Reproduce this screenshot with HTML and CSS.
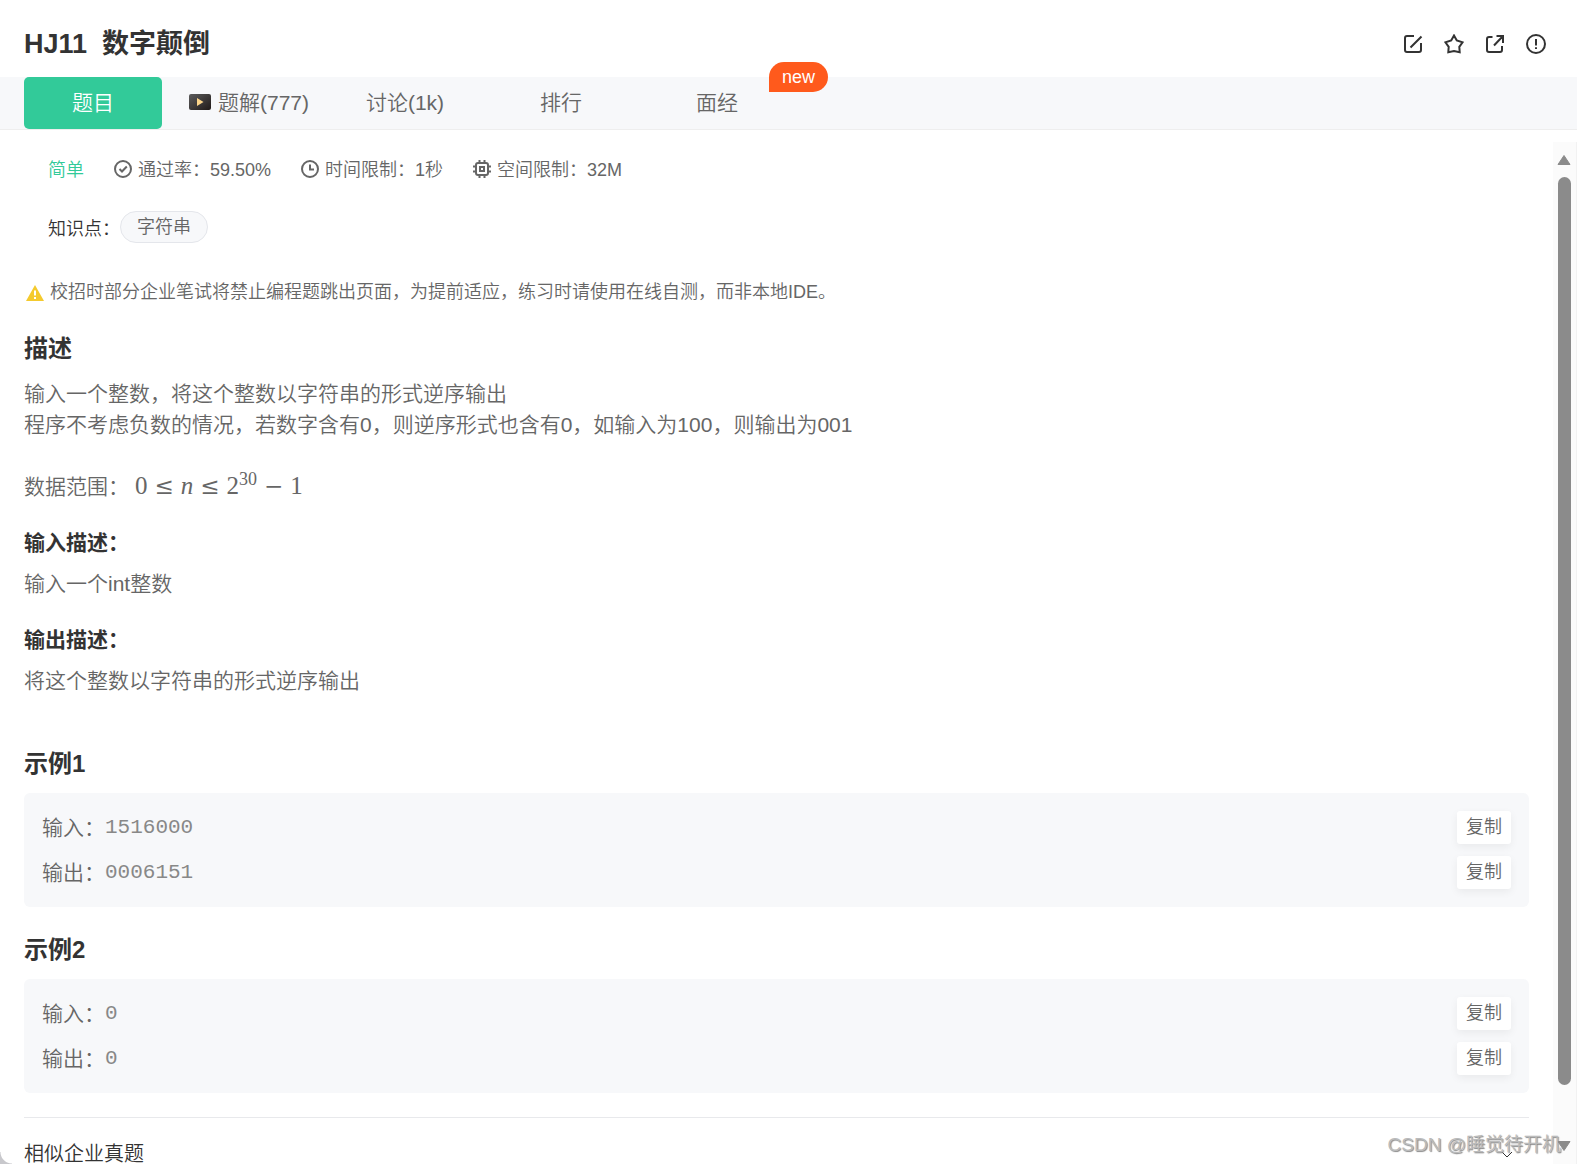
FILE: index.html
```html
<!DOCTYPE html>
<html lang="zh-CN">
  <head>
    <meta charset="utf-8">
    <link rel="stylesheet" href="styles.css">

    <title>HJ11 数字颠倒</title>
  </head>

  <body>
    <header class="header">
      <h1 class="title"><span>HJ11</span><span>数字颠倒</span></h1>
      <div class="tools">
        <button class="tool" aria-label="笔记">
          <svg viewBox="0 0 20 20"><path d="M11 2H4a2 2 0 0 0-2 2v12a2 2 0 0 0 2 2h12a2 2 0 0 0 2-2V9M7.500 13.500L18.500 2.500"/></svg>
        </button>
        <button class="tool" aria-label="收藏">
          <svg viewBox="0 0 20 20"><path d="M10 1.500L12.800 6.500L18.600 8.300L15.300 12.800L15.700 18.300L10 17L4.300 18.300L4.700 12.800L1.400 8.300L7.200 6.500Z"/></svg>
        </button>
        <button class="tool" aria-label="分享">
          <svg viewBox="0 0 20 20"><path d="M7.500 3H4a2 2 0 0 0-2 2v11a2 2 0 0 0 2 2h11a2 2 0 0 0 2-2v-4M11.500 2H18v7M18 2L9 11.500"/></svg>
        </button>
        <button class="tool" aria-label="反馈">
          <svg viewBox="0 0 20 20"><circle cx="10" cy="10" r="9"/><path d="M10 5v6.500M10 13.200v1.800"/></svg>
        </button>
      </div>
    </header>

    <nav class="tabs">
      <a href="#" class="tab active">题目</a>
      <a href="#" class="tab">
        <svg class="video" viewBox="0 0 22 18">
          <defs><linearGradient id="dark" x1="0" y1="0" x2="1" y2="1"><stop offset="0" stop-color="#5c5c5c"/><stop offset="1" stop-color="#201a18"/></linearGradient></defs>
          <rect x="0" y="1" width="22" height="16" rx="2" fill="url(#dark)"/>
          <path d="M8 5L14.500 9L8 13Z" fill="#fcd58a"/>
        </svg>题解(777)</a>
      <a href="#" class="tab">讨论(1k)</a>
      <a href="#" class="tab">排行</a>
      <a href="#" class="tab">面经<span class="badge">new</span></a>
    </nav>

    <div class="wrap">
      <main class="content">
        <div class="meta">
          <span class="easy">简单</span>
          <span class="item">
            <svg viewBox="0 0 18 18"><circle cx="9" cy="9" r="8"/><path d="M5.500 9L8 11.500L12.800 6.500"/></svg>通过率：59.50%</span>
          <span class="item">
            <svg viewBox="0 0 18 18"><circle cx="9" cy="9" r="8"/><path d="M9 4.500V9.500H13"/></svg>时间限制：1秒</span>
          <span class="item">
            <svg viewBox="0 0 18 18"><rect x="3" y="3" width="12" height="12" rx="2"/><rect x="7" y="7" width="4" height="4"/><path d="M6.500 0v3M11.500 0v3M6.500 15v3M11.500 15v3M0 6.500h3M0 11.500h3M15 6.500h3M15 11.500h3"/></svg>空间限制：32M</span>
        </div>

        <div class="points"><span>知识点：</span><a href="#" class="tag">字符串</a></div>

        <p class="notice">
          <svg viewBox="0 0 18 16"><path d="M9 0L18 16H0Z" fill="#f4ca2e"/><path d="M9 5.500v5M9 12v2" stroke="#fff" stroke-width="2"/></svg>校招时部分企业笔试将禁止编程题跳出页面，为提前适应，练习时请使用在线自测，而非本地IDE。</p>

        <h2>描述</h2>
        <p class="text">输入一个整数，将这个整数以字符串的形式逆序输出<br>程序不考虑负数的情况，若数字含有0，则逆序形式也含有0，如输入为100，则输出为001</p>
        <p class="text range">数据范围：<span class="math"><span>0</span><span class="op">≤</span><i>n</i><span class="op">≤</span><span>2<sup>30</sup></span><span class="op">−</span><span>1</span></span></p>

        <h3>输入描述：</h3>
        <p class="text">输入一个int整数</p>

        <h3>输出描述：</h3>
        <p class="text">将这个整数以字符串的形式逆序输出</p>

        <section class="example">
          <h2>示例1</h2>
          <div class="box">
            <div class="row"><span>输入：</span><code>1516000</code><button class="copy">复制</button></div>
            <div class="row"><span>输出：</span><code>0006151</code><button class="copy">复制</button></div>
          </div>
        </section>

        <section class="example">
          <h2>示例2</h2>
          <div class="box">
            <div class="row"><span>输入：</span><code>0</code><button class="copy">复制</button></div>
            <div class="row"><span>输出：</span><code>0</code><button class="copy">复制</button></div>
          </div>
        </section>

        <div class="similar">
          <span>相似企业真题</span>
          <button class="fold" aria-label="展开"><svg viewBox="0 0 12 8"><path d="M1 1L6 6L11 1"/></svg></button>
        </div>
      </main>

      <div class="scrollbar">
        <svg viewBox="0 0 14 11"><path d="M7 1L13 10H1Z"/></svg>
        <div class="thumb"></div>
        <svg viewBox="0 0 14 11"><path d="M1 1H13L7 10Z"/></svg>
      </div>
    </div>

    <div class="corner"></div>
    <div class="watermark">CSDN @睡觉待开机</div>
  </body>
</html>
```

FILE: styles.css
```css
*{
  box-sizing: border-box;
}

body{
  margin: 0;
  height: 100vh;
  display: flex;
  flex-direction: column;
  overflow: hidden;
  position: relative;
  background-color: white;
  color: #666;
  font-family: "Liberation Sans", "Noto Sans CJK SC", sans-serif;
  font-size: 21px;
  font-weight: 350;
  line-height: 31px;
}

h1, h2, h3, p{
  margin: 0;
}

h1, h2, h3{
  color: #333;
  font-weight: bold;
}

a{
  color: inherit;
  text-decoration: none;
}

button{
  padding: 0;
  border: none;
  background: none;
  color: inherit;
  font: inherit;
  cursor: pointer;
}

svg{
  flex: none;
  fill: none;
}

.header{
  display: flex;
  justify-content: space-between;
  align-items: center;
  padding: 10px 30px 0 24px;
  height: 77px;
}

.title{
  display: flex;
  gap: 15px;
  padding-top: 2px;
  font-size: 27px;
}

.tools{
  display: flex;
  gap: 19px;
}

.tool{
  width: 22px;
  height: 22px;
}

.tool svg{
  display: block;
  margin: 0 auto;
  width: 20px;
  height: 20px;
  stroke: #333;
  stroke-width: 2;
}

.tabs{
  display: flex;
  gap: 18px;
  padding: 0 24px;
  background-color: #f7f8fa;
  border-bottom: 1px solid #eee;
}

.tab{
  position: relative;
  display: flex;
  justify-content: center;
  align-items: center;
  gap: 7px;
  width: 138px;
  height: 52px;
  padding-bottom: 2px;
  border-radius: 5px;
}

.active{
  background-color: #32ca99;
  color: white;
}

.video{
  width: 22px;
  height: 18px;
}

.badge{
  position: absolute;
  top: -15px;
  left: 121px;
  padding: 0 13px;
  border-radius: 15px 15px 15px 0;
  background-color: #ff5a1c;
  color: white;
  font-size: 18px;
  line-height: 30px;
}

.wrap{
  display: flex;
  flex: 1;
  min-height: 0;
}

.content{
  flex: 1;
  min-width: 0;
  padding: 25px 24px 0;
  overflow: hidden;
}

.meta{
  display: flex;
  gap: 30px;
  padding-left: 24px;
  font-size: 18px;
}

.easy{
  color: #32ca99;
}

.item{
  display: flex;
  align-items: center;
  gap: 6px;
}

.item svg{
  width: 18px;
  height: 18px;
  margin-bottom: 4px;
  stroke: #666;
  stroke-width: 2;
}

.points{
  display: flex;
  align-items: flex-start;
  padding: 25px 0 0 24px;
  color: #333;
  font-size: 18px;
}

.points span{
  padding-top: 3px;
}

.tag{
  padding: 0 16px;
  border: 1px solid #e4e6eb;
  border-radius: 16px;
  background-color: #f7f8fa;
  color: #666;
  line-height: 30px;
}

.notice{
  display: flex;
  align-items: center;
  gap: 6px;
  margin: 32px 0 24px;
  padding-left: 2px;
  font-size: 18px;
}

.notice svg{
  width: 18px;
  height: 16px;
}

h2{
  margin-bottom: 12px;
  font-size: 24px;
  line-height: 34px;
}

h3{
  margin: 25px 0 10px;
  font-size: 21px;
  line-height: 31px;
}

.range{
  margin-top: 30px;
}

.math{
  display: inline-flex;
  align-items: baseline;
  gap: 7px;
  margin-left: 6px;
  font-family: "Liberation Serif", serif;
  font-size: 25px;
}

.math .op{
  font-family: "DejaVu Serif", serif;
  font-size: 23px;
  font-weight: normal;
}

.math sup{
  font-size: 18px;
  line-height: 0;
}

.example{
  margin-top: 26px;
}

.text + .example{
  margin-top: 51px;
}

.box{
  display: flex;
  flex-direction: column;
  gap: 12px;
  padding: 18px;
  border-radius: 6px;
  background-color: #f7f8fa;
}

.row{
  display: flex;
  align-items: center;
  height: 33px;
}

code{
  color: #888;
  font-family: "Liberation Mono", monospace;
  font-size: 21px;
}

.copy{
  margin-left: auto;
  width: 54px;
  height: 33px;
  border-radius: 3px;
  background-color: white;
  box-shadow: 0 3px 8px rgba(0, 0, 0, 0.06);
  font-size: 18px;
}

.similar{
  display: flex;
  justify-content: space-between;
  align-items: center;
  margin-top: 24px;
  padding: 21px 16px 0 0;
  border-top: 1px solid #e8e9ec;
  color: #333;
  font-size: 20px;
}

.fold svg{
  display: block;
  width: 12px;
  height: 8px;
  stroke: #333;
}

.scrollbar{
  display: flex;
  flex-direction: column;
  align-items: center;
  gap: 11px;
  width: 24px;
  margin-top: 12px;
  padding: 12px 1px 12px 0;
  border-right: 1px solid #f2f2f2;
  background-color: #fbfbfb;
}

.scrollbar svg{
  width: 14px;
  height: 12px;
  fill: #8b8b8b;
  stroke: #8b8b8b;
  stroke-linejoin: round;
}

.thumb{
  flex: 1;
  width: 13px;
  margin-bottom: 44px;
  border-radius: 7px;
  background-color: #8b8b8b;
}

.corner{
  position: absolute;
  left: 0;
  bottom: 0;
  width: 12px;
  height: 12px;
  background: radial-gradient(circle at 100% 0, transparent 11px, #c8c8cc 12px);
}

.watermark{
  position: absolute;
  right: 16px;
  bottom: 4px;
  color: #bbb;
  font-size: 19px;
  text-shadow: 1px 1px 1px #888;
}
```
